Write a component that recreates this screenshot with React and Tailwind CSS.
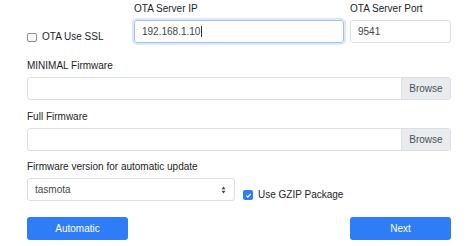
import React from "react";

const Label = ({ children, className = "" }) => (
  <label className={`block text-[10px] leading-[12px] text-[#212529] ${className}`}>{children}</label>
);

const FileInput = () => (
  <div className="flex h-[23px] w-full overflow-hidden rounded-[3px] border border-[#dcdfe3] bg-white">
    <div className="flex-1" />
    <div className="flex w-[49px] items-center justify-center border-l border-[#dcdfe3] bg-[#e9ecef] text-[10px] text-[#495057]">
      Browse
    </div>
  </div>
);

const App = () => {
  return (
    <div
      className="h-[246px] w-[474px] bg-white pl-[27px] pt-[3px]"
      style={{ fontFamily: '"Liberation Sans", Arial, sans-serif' }}
    >
      <div className="w-[424px]">
        <div className="grid grid-cols-[101px_210px_101px] gap-x-[6px]">
          <div className="flex items-end">
            <div className="flex items-center gap-[5px]">
              <span className="h-[9px] w-[10px] rounded-[2px] border border-[#8a8a8a] bg-white" />
              <span className="text-[10px] leading-[12px] text-[#212529]">OTA Use SSL</span>
            </div>
          </div>
          <div>
            <Label className="mb-[5px]">OTA Server IP</Label>
            <div className="flex h-[23px] items-center rounded-[3px] border border-[#9ec2f7] px-[7px] text-[10px] text-[#3f464d] shadow-[0_0_0_2px_rgba(59,130,246,0.18)]">
              192.168.1.10
              <span className="ml-[1px] h-[11px] w-px bg-[#333]" />
            </div>
          </div>
          <div>
            <Label className="mb-[5px]">OTA Server Port</Label>
            <div className="flex h-[23px] items-center rounded-[3px] border border-[#dcdfe3] px-[7px] text-[10px] text-[#3f464d]">
              9541
            </div>
          </div>
        </div>

        <Label className="mb-[5px] mt-[17px]">MINIMAL Firmware</Label>
        <FileInput />

        <Label className="mb-[5px] mt-[11px]">Full Firmware</Label>
        <FileInput />

        <Label className="mb-[5px] mt-[10px]">Firmware version for automatic update</Label>
        <div className="flex items-end gap-[8px]">
          <div className="flex h-[23px] w-[208px] items-center justify-between rounded-[3px] border border-[#dcdfe3] bg-white pl-[7px] pr-[8px] text-[10px] text-[#3f464d]">
            <span>tasmota</span>
            <svg width="5" height="8" viewBox="0 0 5 8">
              <path d="M0.5 3.2 L2.5 0.6 L4.5 3.2 Z" fill="#444" />
              <path d="M0.5 4.8 L2.5 7.4 L4.5 4.8 Z" fill="#444" />
            </svg>
          </div>
          <div className="flex items-center gap-[5px]">
            <span className="flex h-[10px] w-[10px] items-center justify-center rounded-[2px] bg-[#2f7cf6]">
              <svg width="7" height="7" viewBox="0 0 8 8">
                <path d="M1.5 4.2 L3.2 5.8 L6.5 2.2" stroke="white" strokeWidth="1.4" fill="none" />
              </svg>
            </span>
            <span className="text-[10px] leading-[12px] text-[#212529]">Use GZIP Package</span>
          </div>
        </div>

        <div className="mt-[16px] flex justify-between">
          <button className="h-[23px] w-[101px] rounded-[3px] bg-[#2f7df6] text-[10px] text-white">
            Automatic
          </button>
          <button className="h-[23px] w-[101px] rounded-[3px] bg-[#2f7df6] text-[10px] text-white">
            Next
          </button>
        </div>
      </div>
    </div>
  );
};

export default App;
